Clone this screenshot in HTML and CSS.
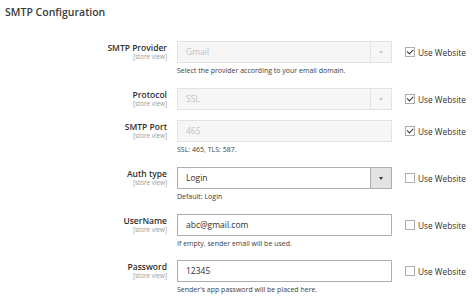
FILE: index.html
```html
<!DOCTYPE html>
<html lang="en">
<head>
    <meta charset="utf-8" />
    <title>SMTP Configuration</title>
    <link rel="stylesheet" href="styles.css">
</head>
<body>
    <h2 class="section-title">SMTP Configuration</h2>

    <div class="fieldset">
        <!-- SMTP Provider -->
        <div class="field">
            <label class="field__label">SMTP Provider<span class="field__scope">[store view]</span></label>
            <div class="field__control">
                <div class="select select--disabled"><span class="select__value">Gmail</span><span class="select__arrow"></span></div>
                <p class="field__note">Select the provider according to your email domain.</p>
            </div>
            <label class="use-default"><span class="checkbox checkbox--checked"></span>Use Website</label>
        </div>

        <!-- Protocol -->
        <div class="field">
            <label class="field__label">Protocol<span class="field__scope">[store view]</span></label>
            <div class="field__control">
                <div class="select select--disabled"><span class="select__value">SSL</span><span class="select__arrow"></span></div>
            </div>
            <label class="use-default"><span class="checkbox checkbox--checked"></span>Use Website</label>
        </div>

        <!-- SMTP Port -->
        <div class="field">
            <label class="field__label">SMTP Port<span class="field__scope">[store view]</span></label>
            <div class="field__control">
                <div class="input input--disabled">465</div>
                <p class="field__note">SSL: 465, TLS: 587.</p>
            </div>
            <label class="use-default"><span class="checkbox checkbox--checked"></span>Use Website</label>
        </div>

        <!-- Auth type -->
        <div class="field">
            <label class="field__label">Auth type<span class="field__scope">[store view]</span></label>
            <div class="field__control">
                <div class="select"><span class="select__value">Login</span><span class="select__arrow"></span></div>
                <p class="field__note">Default: Login</p>
            </div>
            <label class="use-default"><span class="checkbox"></span>Use Website</label>
        </div>

        <!-- UserName -->
        <div class="field">
            <label class="field__label">UserName<span class="field__scope">[store view]</span></label>
            <div class="field__control">
                <div class="input">abc@gmail.com</div>
                <p class="field__note">If empty, sender email will be used.</p>
            </div>
            <label class="use-default"><span class="checkbox"></span>Use Website</label>
        </div>

        <!-- Password -->
        <div class="field">
            <label class="field__label">Password<span class="field__scope">[store view]</span></label>
            <div class="field__control">
                <div class="input">12345</div>
                <p class="field__note">Sender's app password will be placed here.</p>
            </div>
            <label class="use-default"><span class="checkbox"></span>Use Website</label>
        </div>
    </div>
</body>
</html>
```

FILE: styles.css
```css
* {
    box-sizing: border-box; margin: 0; padding: 0;
}
body {
    background: #fff;
    color: #303030;
    font-family: "Open Sans", "Noto Sans", sans-serif;
    font-size: 8.5px;
}
.section-title {
    font-size: 10.5px;
    font-weight: 600;
    color: #3a3a3a;
    line-height: 14px;
    padding: 5px 0 0 5px;
    margin-bottom: 22px;
}
.fieldset {
    display: flex;
    flex-direction: column;
}
.field {
    display: flex;
    align-items: flex-start;
    margin-bottom: 10px;
}
.field:nth-child(5) {
    margin-bottom: 9px;
}
.field__label {
    width: 167px;
    text-align: right;
    font-weight: 600;
    font-size: 8.5px;
    line-height: 11px;
    padding-top: 1px;
    display: flex;
    flex-direction: column;
}
.field__scope {
    font-weight: 400;
    font-size: 6.3px;
    line-height: 8px;
    color: #999;
}
.field__control {
    width: 215px;
    margin-left: 10px;
}
.input, .select {
    height: 22px;
    border: 1px solid #adadad;
    background: #fff;
    display: flex;
    align-items: center;
    font-size: 8.5px;
    line-height: 20px;
}
.input {
    padding-left: 8px;
}
.select__value {
    flex: 1;
    padding-left: 8px;
}
.select__arrow {
    width: 21px;
    height: 100%;
    border-left: 1px solid #adadad;
    background: #e3e3e3;
    display: flex;
    align-items: center;
    justify-content: center;
}
.select__arrow:after {
    content: "";
    border-left: 2.5px solid transparent;
    border-right: 2.5px solid transparent;
    border-top: 3px solid #41362f;
}
.input--disabled, .select--disabled {
    background: #f6f6f6;
    border-color: #e3e3e3;
    color: #c2c2c2;
}
.select--disabled .select__arrow {
    background: #f6f6f6;
    border-left-color: #e3e3e3;
}
.select--disabled .select__arrow:after {
    border-top-color: #c8c8c8;
}
.field__note {
    font-size: 7px;
    line-height: 11px;
    margin-top: 2px;
    margin-bottom: 2px;
    color: #3d3d3d;
}
.use-default {
    margin-left: 13px;
    display: flex;
    align-items: center;
    height: 22px;
    font-size: 8.3px;
    color: #303030;
}
.checkbox {
    width: 10px;
    height: 10px;
    border: 1px solid #adadad;
    background: #fff;
    margin-right: 3px;
    display: flex;
    align-items: center;
    justify-content: center;
}
.checkbox--checked:after {
    content: "";
    width: 5px;
    height: 2.5px;
    border-left: 1.5px solid #303030;
    border-bottom: 1.5px solid #303030;
    transform: translateY(-1px) rotate(-45deg);
}
```
